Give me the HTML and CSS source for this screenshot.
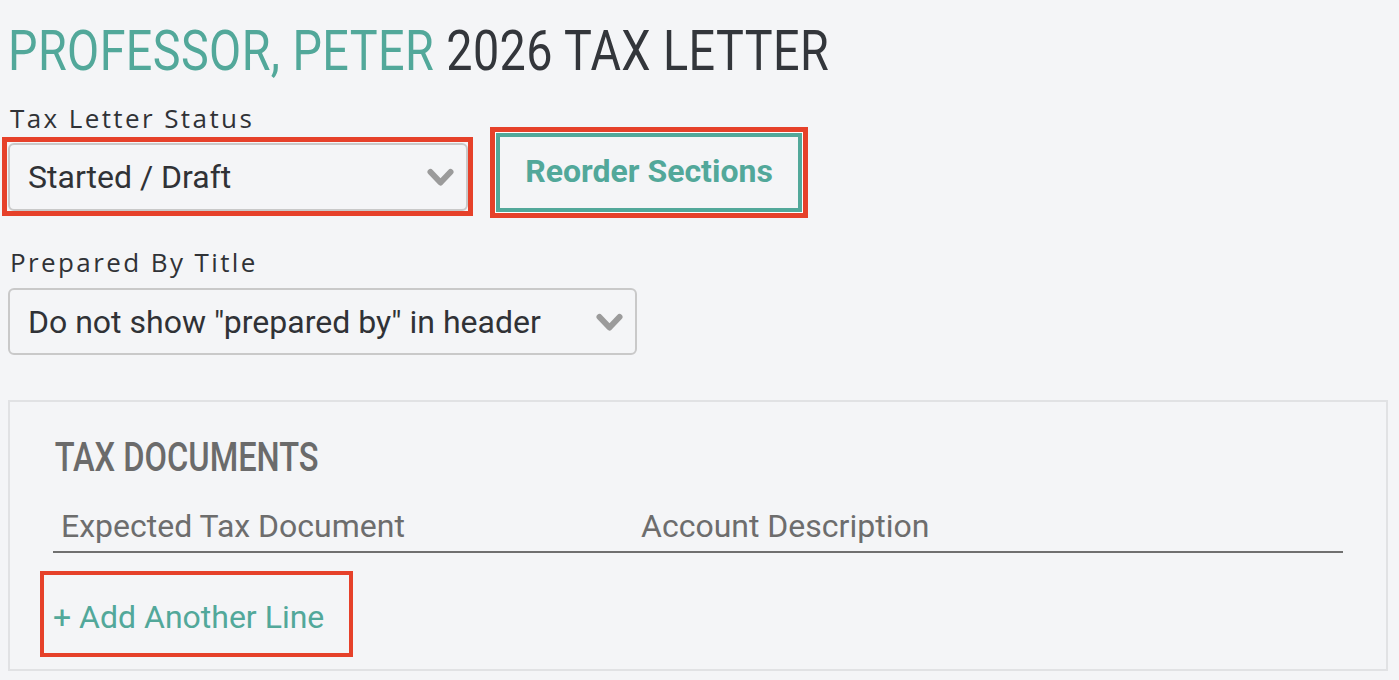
FILE: index.html
```html
<!DOCTYPE html>
<html lang="en">
<head>
<meta charset="utf-8">
<title>Tax Letter</title>
<link rel="stylesheet" href="styles.css">
</head>
<body>
<div class="page">
  <h1 class="title"><span class="title-inner"><span class="name">PROFESSOR, PETER</span> 2026 TAX LETTER</span></h1>

  <div class="field">
    <div class="label">Tax Letter Status</div>
    <div class="row">
      <div class="annot annot-select">
        <div class="select select-status">
          <span class="select-text">Started / Draft</span>
          <svg class="chev" width="27" height="19" viewBox="0 0 27 19"><polyline points="3.5,4 13.5,14.5 23.5,4" fill="none" stroke="#9b9b9b" stroke-width="6" stroke-linecap="round" stroke-linejoin="round"/></svg>
        </div>
      </div>
      <div class="annot annot-btn">
        <button class="btn">Reorder Sections</button>
      </div>
    </div>
  </div>

  <div class="field field-2">
    <div class="label">Prepared By Title</div>
    <div class="select select-prepared">
      <span class="select-text">Do not show "prepared by" in header</span>
      <svg class="chev" width="27" height="19" viewBox="0 0 27 19"><polyline points="3.5,4 13.5,14.5 23.5,4" fill="none" stroke="#9b9b9b" stroke-width="6" stroke-linecap="round" stroke-linejoin="round"/></svg>
    </div>
  </div>

  <section class="panel">
    <h2 class="panel-title"><span class="panel-title-inner">TAX DOCUMENTS</span></h2>
    <div class="thead">
      <div class="th">Expected Tax Document</div>
      <div class="th">Account Description</div>
    </div>
    <div class="annot annot-add">
      <a class="add-link" href="#">+ Add Another Line</a>
    </div>
  </section>
</div>
</body>
</html>
```

FILE: styles.css
```css
* { box-sizing: border-box; }

html, body {
  margin: 0;
  padding: 0;
  background: #f4f5f7;
}

body {
  font-family: Roboto, "Liberation Sans", Arial, sans-serif;
  color: #303236;
}

.page {
  width: 1399px;
  height: 680px;
  overflow: hidden;
  padding: 23px 11px 0 8px;
}

.title {
  margin: 0;
  font-family: Roboto, "Liberation Sans", sans-serif;
  font-weight: 400;
  font-size: 56px;
  line-height: 56px;
  color: #33363b;
  white-space: nowrap;
}

.title-inner {
  display: inline-block;
  transform: scaleX(0.834);
  transform-origin: 0 50%;
  letter-spacing: 0.5px;
}

.name { color: #52a89a; }

.field { margin-top: 24px; }
.field-2 { margin-top: 29px; }

.label {
  font-family: "Open Sans", "DejaVu Sans", sans-serif;
  font-size: 26px;
  line-height: 30px;
  letter-spacing: 2.4px;
  color: #303236;
  padding-left: 2px;
}

.row {
  display: flex;
  align-items: flex-start;
  margin-top: 4px;
}

.annot {
  border: 5px solid #e6412a;
}

.annot-select {
  margin-left: -6px;
  padding: 1px 0 0 1px;
}

.select {
  display: flex;
  align-items: center;
  justify-content: space-between;
  border: 2px solid #c9c9c9;
  border-radius: 6px;
  background: #f4f5f7;
  padding: 0 12px 0 18px;
  font-size: 32px;
  color: #303236;
}

.select-status {
  width: 460px;
  height: 68px;
}

.select-prepared {
  width: 629px;
  height: 67px;
  margin-top: 11px;
}

.chev { display: block; margin-top: 1px; }

.annot-btn {
  margin-left: 17px;
  margin-top: -10px;
  padding: 1px;
  background: #ffffff;
}

.btn {
  display: block;
  width: 306px;
  height: 79px;
  border: 4px solid #52a89a;
  background: #f4f5f7;
  color: #52a89a;
  font-family: Roboto, "Liberation Sans", sans-serif;
  font-weight: 700;
  font-size: 32px;
  padding: 0 0 4px 0;
  margin: 0;
  cursor: pointer;
}

.panel {
  margin-top: 45px;
  border: 2px solid #e1e2e4;
  padding: 36px 43px 12px 43px;
  height: 271px;
}

.panel-title {
  margin: 0;
  font-family: Roboto, "Liberation Sans", sans-serif;
  font-weight: 500;
  font-size: 40px;
  line-height: 40px;
  color: #6b6b6b;
  white-space: nowrap;
}

.panel-title-inner {
  display: inline-block;
  transform: scaleX(0.815);
  transform-origin: 0 50%;
  padding-left: 2px;
}

.thead {
  display: grid;
  grid-template-columns: 580px 1fr;
  margin-top: 30px;
  padding-bottom: 7px;
  border-bottom: 2px solid #707070;
}

.th {
  padding-left: 8px;
  font-size: 32px;
  line-height: 36px;
  color: #6d6d6d;
}

.annot-add {
  display: inline-block;
  margin-top: 18px;
  margin-left: -13px;
  border-width: 4px;
  padding: 24px 25px 18px 9px;
}

.add-link {
  display: block;
  font-size: 32px;
  line-height: 36px;
  color: #52a89a;
  text-decoration: none;
}
```
